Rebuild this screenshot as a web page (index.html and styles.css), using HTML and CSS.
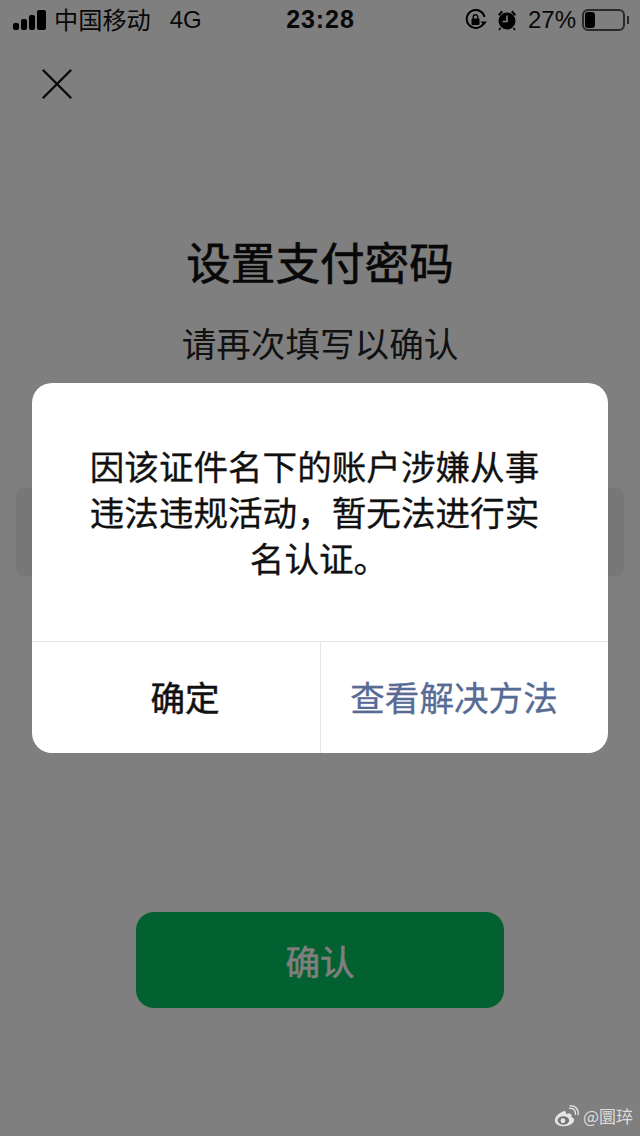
FILE: index.html
```html
<!DOCTYPE html>
<html lang="zh-CN">
<head>
    <meta charset="UTF-8">
    <meta name="viewport" content="width=device-width, initial-scale=1.0">
    <title>设置支付密码</title>
    <link rel="stylesheet" href="styles.css">
</head>
<body>
    <div class="page">
        <header class="status">
            <div class="status-left">
                <svg class="signal" width="34" height="20" viewBox="0 0 34 20">
                    <rect x="0" y="13" width="6" height="7" rx="2"/>
                    <rect x="8" y="9" width="6" height="11" rx="2"/>
                    <rect x="16" y="5" width="6" height="15" rx="2"/>
                    <rect x="24" y="0" width="9" height="20" rx="2"/>
                </svg>
                <span class="carrier">中国移动</span>
                <span class="network">4G</span>
            </div>
            <div class="time">23:28</div>
            <div class="status-right">
                <svg class="lock" width="22" height="22" viewBox="0 0 22 22">
                    <path d="M18.500 14.500A9 9 0 1 1 19.500 8" fill="none" stroke="#000" stroke-width="2"/>
                    <path d="M15.500 12.500h6.500l-3.200 3.800z"/>
                    <rect x="6.500" y="9.500" width="8" height="6.500" rx="1"/>
                    <path d="M8.200 10V8a2.300 2.300 0 0 1 4.600 0v2" fill="none" stroke="#000" stroke-width="1.400"/>
                </svg>
                <svg class="alarm" width="20" height="22" viewBox="0 0 20 22">
                    <circle cx="10" cy="12" r="8.500"/>
                    <path d="M1 5.500 4.500 1.500 6 3 2.500 7zM19 5.500 15.500 1.500 14 3 17.500 7z"/>
                    <path d="M3.500 19 2 21M16.500 19 18 21" stroke="#000" stroke-width="1.600"/>
                    <path d="M10 6.500V12.500H5.500" fill="none" stroke="#fff" stroke-width="1.600"/>
                </svg>
                <span class="battery-text">27%</span>
                <div class="battery"><div class="battery-level"></div></div>
                <div class="battery-tip"></div>
            </div>
        </header>

        <div class="close-row">
            <svg width="30" height="30" viewBox="0 0 30 30">
                <path d="M1.500 1.500 28.500 28.500M28.500 1.500 1.500 28.500" stroke="#111" stroke-width="2.400" fill="none" stroke-linecap="round"/>
            </svg>
        </div>

        <main class="content">
            <h1 class="title">设置支付密码</h1>
            <p class="subtitle">请再次填写以确认</p>
            <div class="pin-box"></div>
            <button class="confirm">确认</button>
        </main>
    </div>

    <div class="overlay">
        <div class="dialog">
            <div class="dialog-msg">
                <p>因该证件名下的账户涉嫌从事违法违规活动，暂无法进行实<span class="msg-end">名认证。</span></p>
            </div>
            <div class="dialog-btns">
                <div class="btn btn-ok">确定</div>
                <div class="btn btn-link">查看解决方法</div>
            </div>
        </div>
    </div>

    <div class="watermark">
        <svg width="25" height="22" viewBox="0 0 28 24">
            <path d="M11.500 6.500C5.500 8.500 1 13 1 17c0 4 5 6.500 10 6.500 6.500 0 11.500-3.500 11.500-7 0-2-2-3-3.200-3.300.8-2.200.2-3.600-1.800-3.900-1.500-.2-3.300.5-4.300 1 .4-1.800.2-3-.5-3.600-.4-.3-.9-.4-1.700-.2z" fill="#e6e6e6"/>
            <ellipse cx="10.500" cy="17" rx="6.500" ry="4.700" fill="#777"/>
            <circle cx="10" cy="17.300" r="2.700" fill="#e6e6e6"/>
            <path d="M17.500 3.500C21 2.800 24.500 5.500 24 10M18 .8C23.500-.2 28 4.500 27 10.500" fill="none" stroke="#e6e6e6" stroke-width="1.500" stroke-linecap="round"/>
        </svg>
        <span>@圜琗</span>
    </div>
</body>
</html>
```

FILE: styles.css
```css
* {
    box-sizing: border-box;
}
html, body {
    margin: 0;
    padding: 0;
}
body {
    position: relative;
    width: 640px;
    height: 1136px;
    overflow: hidden;
    font-family: "Noto Sans CJK SC", "Liberation Sans", sans-serif;
    color: #111;
    background-color: #fff;
}
.page {
    height: 1136px;
    display: flex;
    flex-direction: column;
}

/* status bar */
.status {
    height: 40px;
    padding: 0 11px 0 13px;
    display: grid;
    grid-template-columns: 1fr auto 1fr;
    align-items: center;
    font-family: "Liberation Sans", "Noto Sans CJK SC", sans-serif;
    font-size: 24px;
    color: #111;
}
.status-left, .status-right {
    display: flex;
    align-items: center;
}
.status-right {
    justify-content: flex-end;
}
.signal {
    margin-right: 7px;
}
.carrier {
    font-family: "Noto Sans CJK SC", sans-serif;
    font-size: 24.2px;
    line-height: 36px;
    margin-top: -2px;
}
.network {
    margin-left: 19px;
    margin-top: -1px;
}
.time {
    font-size: 25px;
    font-weight: bold;
    letter-spacing: 0.9px;
    margin-top: -1px;
    margin-left: -1px;
}
.lock {
    margin-right: 10px;
}
.alarm {
    margin-right: 11px;
}
.battery-text {
    margin-top: -1px;
}
.battery {
    width: 43px;
    height: 22px;
    margin-left: 6px;
    padding: 1px;
    border: 2px solid #555;
    border-radius: 6px;
}
.battery-level {
    width: 10px;
    height: 100%;
    background-color: #000;
    border-radius: 3px;
}
.battery-tip {
    width: 2px;
    height: 8px;
    margin-left: 2px;
    background-color: #555;
}

.close-row {
    padding: 29px 0 0 42px;
    height: 58px;
}

.content {
    display: flex;
    flex-direction: column;
    align-items: center;
}
.title {
    margin: 131px 0 0 0;
    font-size: 44.6px;
    line-height: 64px;
    font-weight: 400;
    -webkit-text-stroke: 0.7px #111;
}
.subtitle {
    margin: 25px 0 0 0;
    font-size: 34.6px;
    line-height: 48px;
    color: #222;
}
.pin-box {
    width: 608px;
    height: 88px;
    margin-top: 122px;
    background-color: #eee;
    border-radius: 8px;
}
.confirm {
    width: 368px;
    height: 96px;
    margin-top: 336px;
    border: 0;
    border-radius: 18px;
    background-color: #07c160;
    color: #fff;
    font-family: inherit;
    font-size: 34.6px;
    -webkit-text-stroke: 0.5px #fff;
}

/* dim layer and dialog */
.overlay {
    position: absolute;
    top: 0;
    left: 0;
    width: 640px;
    height: 1136px;
    background-color: rgba(0, 0, 0, 0.5);
    display: flex;
    align-items: center;
    justify-content: center;
}
.dialog {
    width: 576px;
    height: 370px;
    background-color: #fff;
    border-radius: 20px;
    display: flex;
    flex-direction: column;
}
.dialog-msg {
    flex: 1;
    padding: 0 68px 2px 57px;
    display: flex;
    align-items: center;
}
.dialog-msg p {
    margin: 0;
    text-align: center;
    font-size: 34.6px;
    line-height: 46px;
    color: #111;
    -webkit-text-stroke: 0.3px #111;
}
.msg-end {
    display: block;
    padding-left: 9px;
}
.dialog-btns {
    height: 112px;
    border-top: 1px solid #e5e5e5;
    display: grid;
    grid-template-columns: 288px 288px;
}
.btn {
    display: flex;
    align-items: center;
    justify-content: center;
    font-size: 34.6px;
    padding-bottom: 4px;
}
.btn-ok {
    padding-left: 18px;
    color: #111;
    -webkit-text-stroke: 0.5px #111;
}
.btn-link {
    padding-right: 21px;
    border-left: 1px solid #e5e5e5;
    color: #576b95;
    -webkit-text-stroke: 0.3px #576b95;
}

.watermark {
    position: absolute;
    right: 7px;
    bottom: 8px;
    display: flex;
    align-items: center;
    gap: 4px;
    font-size: 17px;
    color: #ddd;
}
```
